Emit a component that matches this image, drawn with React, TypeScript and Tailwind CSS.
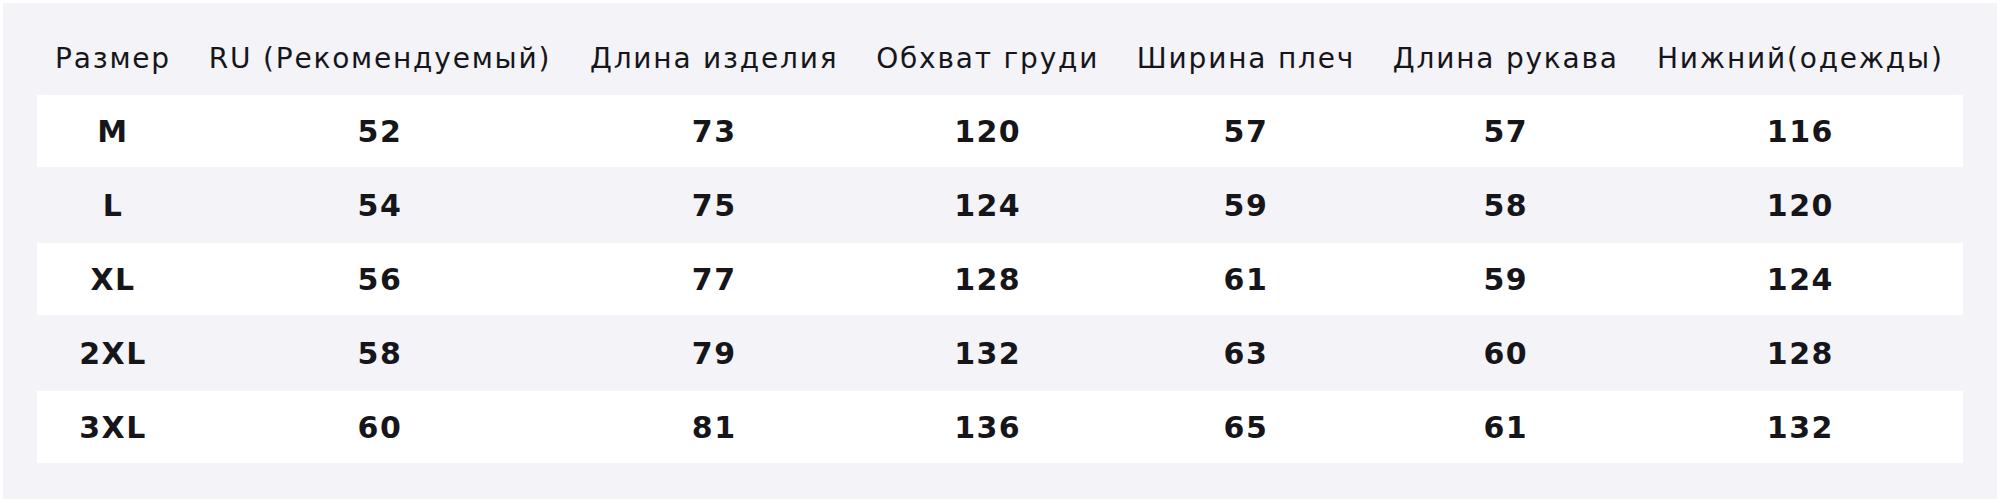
const HEAD = [
  "Размер",
  "RU (Рекомендуемый)",
  "Длина изделия",
  "Обхват груди",
  "Ширина плеч",
  "Длина рукава",
  "Нижний(одежды)",
];

const ROWS = [
  ["M", "52", "73", "120", "57", "57", "116"],
  ["L", "54", "75", "124", "59", "58", "120"],
  ["XL", "56", "77", "128", "61", "59", "124"],
  ["2XL", "58", "79", "132", "63", "60", "128"],
  ["3XL", "60", "81", "136", "65", "61", "132"],
];

export default function App() {
  return (
    <div className="w-[2000px] h-[502px] bg-white p-[3px]" style={{ fontFamily: '"DejaVu Sans", sans-serif' }}>
      <div className="h-full bg-[#f3f3f8] px-[34px] pt-[34px] pb-[36px]">
        <table className="w-full border-collapse text-[#16161a]">
          <thead>
            <tr className="h-[58px]">
              {HEAD.map((h) => (
                <th key={h} className="px-[17px] pb-[14px] text-[28px] tracking-[1.8px] font-normal whitespace-nowrap text-center align-middle">
                  {h}
                </th>
              ))}
            </tr>
          </thead>
          <tbody>
            {ROWS.map((r, i) => (
              <tr key={r[0]} className={i % 2 === 0 ? "bg-white h-[72px]" : "h-[76px]"}>
                {r.map((c, j) => (
                  <td key={j} className="px-[17px] text-[30px] tracking-[1.5px] font-bold text-center align-middle">
                    {c}
                  </td>
                ))}
              </tr>
            ))}
          </tbody>
        </table>
      </div>
    </div>
  );
}
